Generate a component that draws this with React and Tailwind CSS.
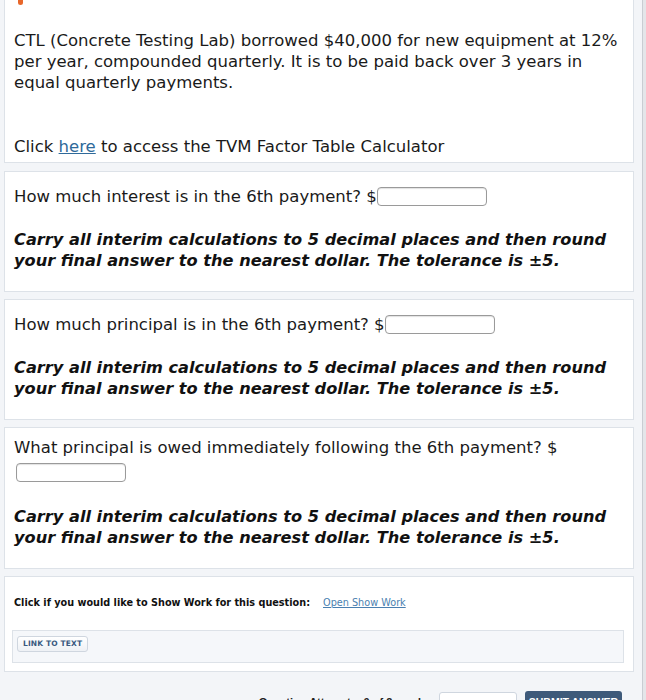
const bodyFont = { fontFamily: '"DejaVu Sans", Verdana, sans-serif' };
const uiFont = { fontFamily: '"Liberation Sans", Arial, sans-serif' };

const Answer = ({ className = "" }) => (
  <input
    type="text"
    className={`h-[19px] w-[110px] rounded-[4px] border border-[#9a9a9a] bg-white shadow-[inset_0_1px_1px_rgba(0,0,0,0.12)] focus:outline-none ${className}`.trim()}
  />
);

const Tolerance = () => (
  <p className="text-[16.2px] font-bold italic leading-[21px] text-[#111]">
    Carry all interim calculations to 5 decimal places and then round your final answer to the
    nearest dollar. The tolerance is ±5.
  </p>
);

const Panel = ({ children, className = "" }) => (
  <section
    className={`relative shrink-0 border border-[#dde2e8] bg-white px-[9px] ${className}`.trim()}
  >
    {children}
  </section>
);

export default function App() {
  return (
    <div
      className="flex h-[700px] w-[646px] overflow-hidden bg-[#f3f5f8] text-[#1a1a1a]"
      style={bodyFont}
    >
      <div className="flex w-[642px] flex-col gap-[7px] pl-[4px] pr-[8px]">
        <Panel className="-mt-[2px] h-[165px] pt-[31px]">
          <span className="absolute left-[13px] top-0 h-[6px] w-[5px] rounded-b-full bg-[#e8672a]" />
          <p className="text-[16.5px] leading-[21px]">
            CTL (Concrete Testing Lab) borrowed $40,000 for new equipment at 12% per year,
            compounded quarterly. It is to be paid back over 3 years in equal quarterly payments.
          </p>
          <p className="mt-[43px] text-[16.5px] leading-[21px]">
            Click{" "}
            <a href="#" className="text-[#2f6a9a] underline">
              here
            </a>{" "}
            to access the TVM Factor Table Calculator
          </p>
        </Panel>

        <Panel className="mt-[1px] h-[121px] pt-[14px]">
          <div className="flex items-center text-[16.5px] leading-[21px]">
            <span>How much interest is in the 6th payment? $</span>
            <Answer />
          </div>
          <div className="mt-[22px]">
            <Tolerance />
          </div>
        </Panel>

        <Panel className="h-[121px] pt-[14px]">
          <div className="flex items-center text-[16.5px] leading-[21px]">
            <span>How much principal is in the 6th payment? $</span>
            <Answer />
          </div>
          <div className="mt-[22px]">
            <Tolerance />
          </div>
        </Panel>

        <Panel className="h-[142px] pt-[9px]">
          <p className="text-[16.5px] leading-[21px]">
            What principal is owed immediately following the 6th payment? $
          </p>
          <Answer className="ml-[2px] mt-[5px] block" />
          <div className="mt-[24px]">
            <Tolerance />
          </div>
        </Panel>

        <Panel className="h-[96px] pt-[19px]">
          <p className="flex items-center text-[9.7px]">
            <span className="font-bold text-[#111]">
              Click if you would like to Show Work for this question:
            </span>
            <a href="#" className="ml-[13px] text-[#4a7fb0] underline">
              Open Show Work
            </a>
          </p>
          <div className="-ml-[2px] mt-[19px] flex h-[33px] items-start border border-[#dde2e8] bg-[#f5f7fa] px-[4px] pt-[5px]">
            <button className="flex h-[16px] items-center rounded-[3px] border border-[#cfd6df] bg-gradient-to-b from-white to-[#eef1f5] px-[5px] text-[7.5px] font-bold leading-none tracking-[0.02em] text-[#3a5a80]">
              LINK TO TEXT
            </button>
          </div>
        </Panel>

        <div
          className="mt-[13px] flex shrink-0 items-start justify-end pr-[12px]"
          style={uiFont}
        >
          <span className="mt-[3px] text-[11px] font-bold leading-[14px] text-[#222]">
            Question Attempts: 0 of 2 used
          </span>
          <button className="ml-[18px] flex h-[22px] w-[78px] items-center justify-center rounded-[3px] border border-[#cfd6df] bg-white text-[8px] font-bold text-[#3a5a80]">
            SAVE FOR LATER
          </button>
          <button className="-mt-[1px] ml-[8px] flex h-[24px] w-[97px] items-center justify-center rounded-[3px] bg-[#3e5a7a] text-[10.5px] font-bold text-white">
            SUBMIT ANSWER
          </button>
        </div>
      </div>
      <div className="w-[4px] shrink-0 border-l border-[#c9cdd2] bg-[#e4e6e9]" />
    </div>
  );
}
